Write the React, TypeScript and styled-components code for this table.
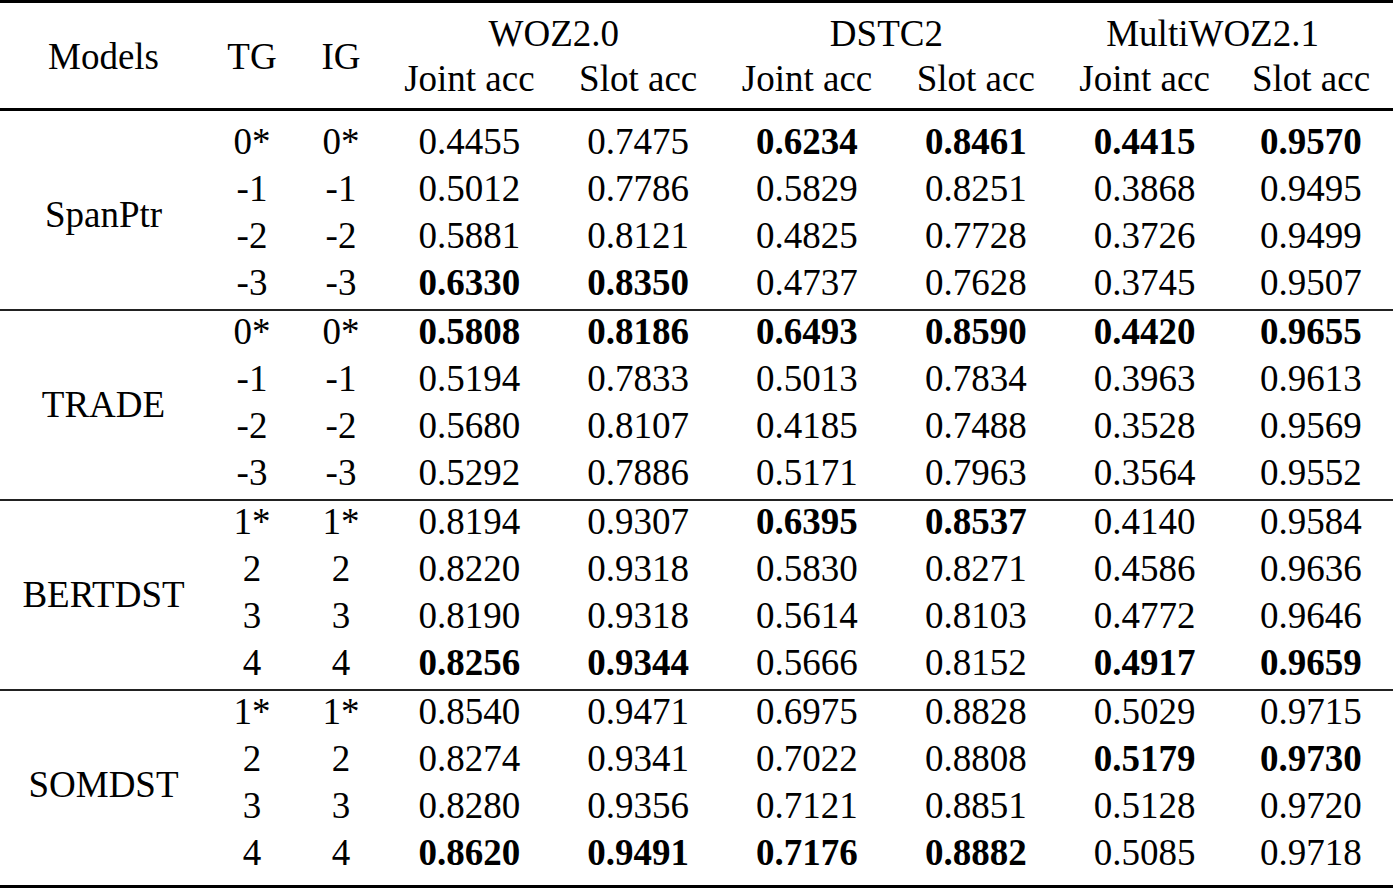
import React from 'react';
import styled, { createGlobalStyle } from 'styled-components';

const COLS = '207px 90px 88px repeat(5, 168.8px) 164px';

const GlobalStyle = createGlobalStyle`
  body {
    margin: 0;
    background: #fff;
    color: #000;
    font-family: 'Liberation Serif', 'Times New Roman', serif;
  }
`;

const Table = styled.div`
  width: 1393px;
  border-top: 3px solid #000;
  border-bottom: 3px solid #000;
  font-size: 37px;
`;

const Header = styled.div`
  display: grid;
  grid-template-columns: ${COLS};
  grid-template-rows: 42px 42px;
  row-gap: 3px;
  padding: 10px 0 8px;
  border-bottom: 3px solid #000;
`;

const HeadCell = styled.div<{ $tall?: boolean }>`
  line-height: 42px;
  text-align: center;
  white-space: nowrap;
  grid-row: ${({ $tall }) => ($tall ? '1 / span 2' : 'auto')};
  align-self: center;
`;

const GroupHead = styled.div<{ $shift?: number }>`
  grid-row: 1;
  grid-column: span 2;
  line-height: 42px;
  text-align: center;
  white-space: nowrap;
  padding-right: ${({ $shift }) => ($shift ? $shift * 2 : 0)}px;
`;

const SubHead = styled.div`
  grid-row: 2;
  line-height: 42px;
  text-align: center;
  white-space: nowrap;
`;

const Section = styled.div<{ $first?: boolean; $last?: boolean }>`
  display: grid;
  grid-template-columns: ${COLS};
  grid-template-rows: repeat(4, 47px);
  padding-top: ${({ $first }) => ($first ? 10 : 0)}px;
  padding-bottom: ${({ $last }) => ($last ? 6 : 0)}px;
  border-bottom: ${({ $last }) => ($last ? 'none' : '2px solid #222')};
`;

const ModelName = styled.div`
  grid-column: 1;
  grid-row: 1 / span 4;
  align-self: center;
  line-height: 42px;
  text-align: center;
`;

const Cell = styled.div<{ $bold?: boolean }>`
  line-height: 42px;
  padding-bottom: 5px;
  text-align: center;
  font-weight: ${({ $bold }) => ($bold ? 700 : 400)};
`;

interface Row {
  tg: string;
  ig: string;
  values: string[];
  bold: number[];
}

interface Group {
  model: string;
  rows: Row[];
}

const groups: Group[] = [
  {
    model: 'SpanPtr',
    rows: [
      { tg: '0*', ig: '0*', values: ['0.4455', '0.7475', '0.6234', '0.8461', '0.4415', '0.9570'], bold: [2, 3, 4, 5] },
      { tg: '-1', ig: '-1', values: ['0.5012', '0.7786', '0.5829', '0.8251', '0.3868', '0.9495'], bold: [] },
      { tg: '-2', ig: '-2', values: ['0.5881', '0.8121', '0.4825', '0.7728', '0.3726', '0.9499'], bold: [] },
      { tg: '-3', ig: '-3', values: ['0.6330', '0.8350', '0.4737', '0.7628', '0.3745', '0.9507'], bold: [0, 1] },
    ],
  },
  {
    model: 'TRADE',
    rows: [
      { tg: '0*', ig: '0*', values: ['0.5808', '0.8186', '0.6493', '0.8590', '0.4420', '0.9655'], bold: [0, 1, 2, 3, 4, 5] },
      { tg: '-1', ig: '-1', values: ['0.5194', '0.7833', '0.5013', '0.7834', '0.3963', '0.9613'], bold: [] },
      { tg: '-2', ig: '-2', values: ['0.5680', '0.8107', '0.4185', '0.7488', '0.3528', '0.9569'], bold: [] },
      { tg: '-3', ig: '-3', values: ['0.5292', '0.7886', '0.5171', '0.7963', '0.3564', '0.9552'], bold: [] },
    ],
  },
  {
    model: 'BERTDST',
    rows: [
      { tg: '1*', ig: '1*', values: ['0.8194', '0.9307', '0.6395', '0.8537', '0.4140', '0.9584'], bold: [2, 3] },
      { tg: '2', ig: '2', values: ['0.8220', '0.9318', '0.5830', '0.8271', '0.4586', '0.9636'], bold: [] },
      { tg: '3', ig: '3', values: ['0.8190', '0.9318', '0.5614', '0.8103', '0.4772', '0.9646'], bold: [] },
      { tg: '4', ig: '4', values: ['0.8256', '0.9344', '0.5666', '0.8152', '0.4917', '0.9659'], bold: [0, 1, 4, 5] },
    ],
  },
  {
    model: 'SOMDST',
    rows: [
      { tg: '1*', ig: '1*', values: ['0.8540', '0.9471', '0.6975', '0.8828', '0.5029', '0.9715'], bold: [] },
      { tg: '2', ig: '2', values: ['0.8274', '0.9341', '0.7022', '0.8808', '0.5179', '0.9730'], bold: [4, 5] },
      { tg: '3', ig: '3', values: ['0.8280', '0.9356', '0.7121', '0.8851', '0.5128', '0.9720'], bold: [] },
      { tg: '4', ig: '4', values: ['0.8620', '0.9491', '0.7176', '0.8882', '0.5085', '0.9718'], bold: [0, 1, 2, 3] },
    ],
  },
];

const datasets = [
  { name: 'WOZ2.0', shift: 0 },
  { name: 'DSTC2', shift: 5 },
  { name: 'MultiWOZ2.1', shift: 14 },
];

const App: React.FC = () => {
  return (
    <>
      <GlobalStyle />
      <Table>
        <Header>
          <HeadCell $tall>Models</HeadCell>
          <HeadCell $tall>TG</HeadCell>
          <HeadCell $tall>IG</HeadCell>
          {datasets.map((d) => (
            <GroupHead key={d.name} $shift={d.shift}>
              {d.name}
            </GroupHead>
          ))}
          {datasets.map((d) => (
            <React.Fragment key={d.name}>
              <SubHead style={{ gridColumn: 'auto' }}>Joint acc</SubHead>
              <SubHead>Slot acc</SubHead>
            </React.Fragment>
          ))}
        </Header>
        {groups.map((g, gi) => (
          <Section key={g.model} $first={gi === 0} $last={gi === groups.length - 1}>
            <ModelName>{g.model}</ModelName>
            {g.rows.map((r) => (
              <React.Fragment key={r.tg}>
                <Cell style={{ gridColumn: 2 }}>{r.tg}</Cell>
                <Cell>{r.ig}</Cell>
                {r.values.map((v, vi) => (
                  <Cell key={vi} $bold={r.bold.includes(vi)}>
                    {v}
                  </Cell>
                ))}
              </React.Fragment>
            ))}
          </Section>
        ))}
      </Table>
    </>
  );
};

export default App;
